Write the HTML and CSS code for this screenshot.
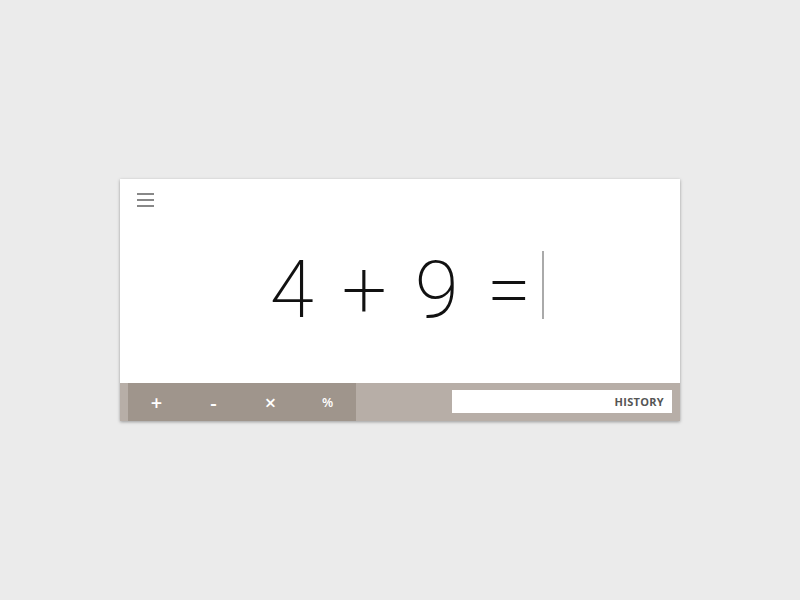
FILE: index.html
```html
<!DOCTYPE html>
<html>
<head>
<meta charset="utf-8">
<link rel="stylesheet" href="styles.css">
</head>
<body>
<div class="card">
  <div class="display">
    <div class="menu"><span></span><span></span><span></span></div>
    <div class="expr">
      <span class="tok">4</span>
      <span class="tok">+</span>
      <span class="tok">9</span>
      <span class="tok">=</span>
      <span class="cursor"></span>
    </div>
  </div>
  <div class="bar">
    <div class="ops">
      <div class="op">+</div>
      <div class="op">-</div>
      <div class="op">×</div>
      <div class="op pct">%</div>
    </div>
    <div class="history">HISTORY</div>
  </div>
</div>
</body>
</html>
```
FILE: styles.css
```css
html, body { margin: 0; padding: 0; }
body {
  background: #ebebeb;
  width: 800px;
  height: 600px;
  font-family: "Lato", "Liberation Sans", sans-serif;
}
.card {
  width: 560px;
  margin: 179px auto 0;
  background: #fff;
  box-shadow: 0 1px 3px rgba(0,0,0,0.35);
}
.display {
  height: 204px;
  display: flex;
  flex-direction: column;
}
.menu {
  padding: 14px 0 0 17px;
  display: flex;
  flex-direction: column;
  gap: 4px;
  height: 14px;
}
.menu span {
  display: block;
  width: 17px;
  height: 2px;
  background: #888;
}
.expr {
  display: flex;
  align-items: center;
  justify-content: center;
  gap: 28px;
  margin-top: 43px;
  padding-left: 14px;
  font-family: "Roboto", "Lato", sans-serif;
  font-weight: 200;
  font-size: 80px;
  line-height: 80px;
  color: #111;
}
.cursor {
  width: 2px;
  height: 68px;
  background: #aaa;
  margin-left: -17px;
  margin-top: -10px;
}
.bar {
  height: 38px;
  background: #b7aea7;
  display: flex;
  align-items: flex-start;
  padding: 0 8px;
}
.ops {
  display: flex;
  height: 38px;
}
.op {
  width: 57px;
  height: 38px;
  background: #9f958c;
  color: #fff;
  font-family: "Open Sans", sans-serif;
  font-weight: 600;
  font-size: 20px;
  display: flex;
  align-items: center;
  justify-content: center;
}
.op.pct { font-size: 13px; }
.history {
  margin: 7px 0 0 auto;
  width: 220px;
  height: 23px;
  background: #fff;
  color: #555;
  font-family: "Open Sans", sans-serif;
  font-weight: 700;
  font-size: 11px;
  letter-spacing: 0.3px;
  display: flex;
  align-items: center;
  justify-content: flex-end;
  padding-right: 8px;
  box-sizing: border-box;
}
```
